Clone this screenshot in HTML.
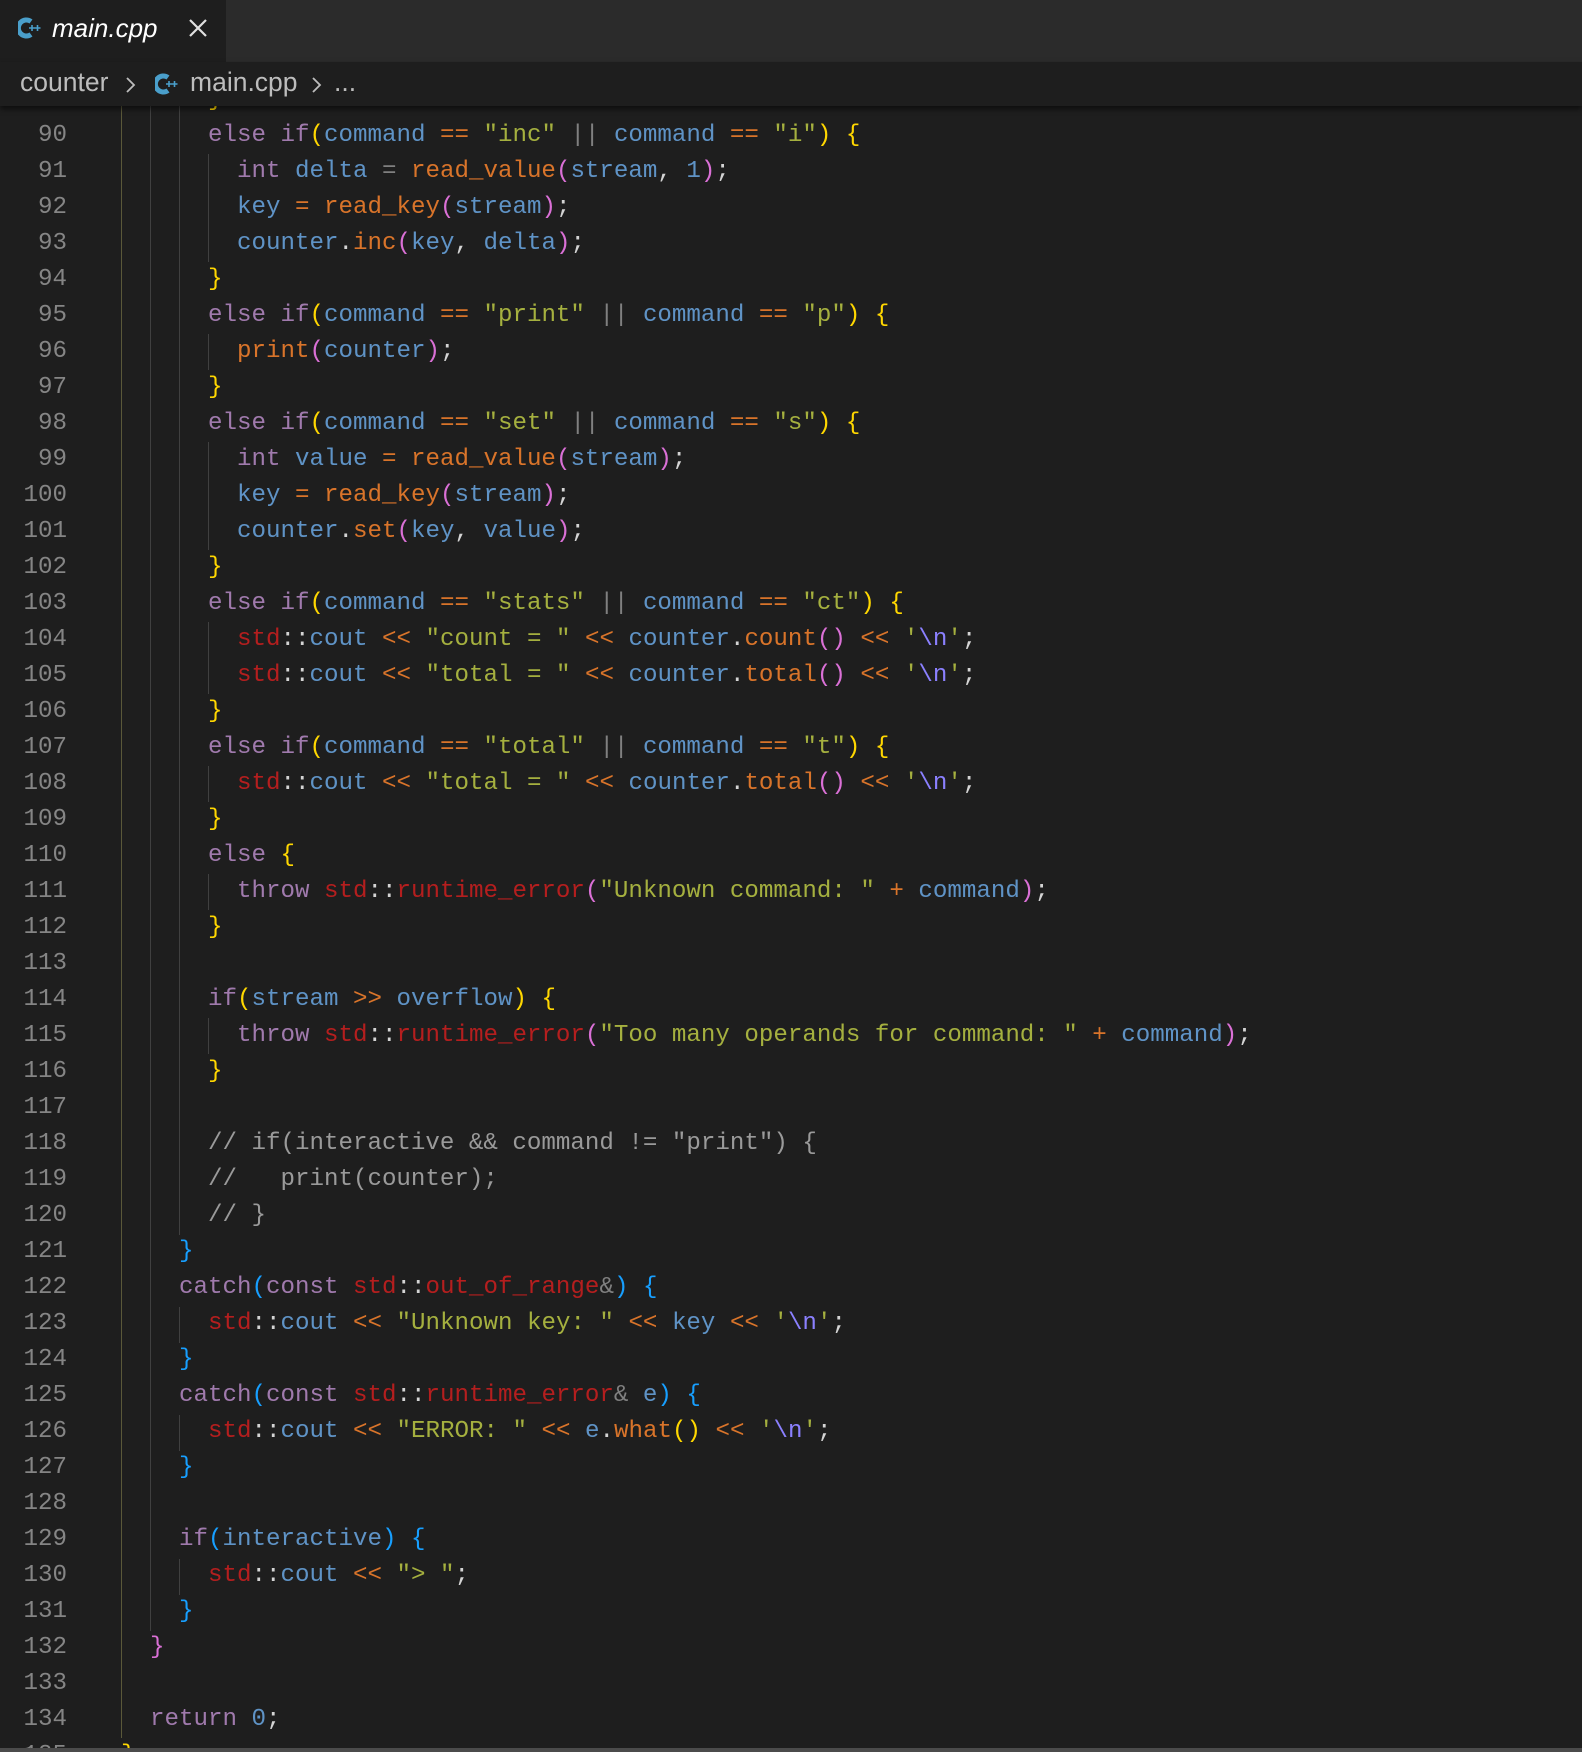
<!DOCTYPE html>
<html><head><meta charset="utf-8">
<style>
*{margin:0;padding:0;box-sizing:border-box}
html,body{width:1582px;height:1752px;overflow:hidden;background:#1e1e1e}
body{position:relative;font-family:"Liberation Sans",sans-serif}
#tabbar{position:absolute;left:0;top:0;width:1582px;height:62px;background:#2b2b2b;z-index:5}
#tab{position:absolute;left:0;top:0;width:226px;height:62px;background:#1e1e1e}
#tab .t{position:absolute;left:52px;top:13px;font-size:26px;font-style:italic;color:#fff}
#tab .x{position:absolute;left:188px;top:18px}
#bc{position:absolute;left:0;top:62px;width:1582px;height:44px;background:#1e1e1e;z-index:5;box-shadow:0 3px 5px rgba(0,0,0,.55);color:#bdbdbd;font-size:26.5px}
#bc span{position:absolute;top:5px}
.ico{position:absolute}
#code{position:absolute;left:0;top:82px;width:1582px;font-family:"Liberation Mono",monospace;font-size:24.17px}
.l{height:36px;line-height:36px;white-space:pre;position:relative}
.n{position:absolute;left:0;width:67px;text-align:right;color:#858585}
.c{position:absolute;left:121px;color:#d4d4d4}
.g{position:absolute;width:1px;background:#404040}
.k{color:#a07aad}.v{color:#5f93c6}.f{color:#d9742a}.s{color:#a5b03f}.o{color:#d9742a}
.gr{color:#808080}.sd{color:#b51e1e}.e{color:#8b80ff}.cm{color:#9a9a9a}
.y{color:#ffd700}.p{color:#da70d6}.b{color:#179fff}.nm{color:#5f93c6}
#sb{position:absolute;left:0;top:1748px;width:1582px;height:4px;background:#4b4b4b;z-index:6}
</style></head><body>
<div id="tabbar"><div id="tab">
<svg class="ico" style="left:18px;top:17px" width="24" height="22" viewBox="0 0 24 22"><path d="M13 4.5A8 8 0 1 0 13 17.5" fill="none" stroke="#4a9fcb" stroke-width="5"/><path d="M14 8v6M11 11h6M19.5 8v6M16.5 11h6" stroke="#4a9fcb" stroke-width="1.6"/></svg>
<span class="t">main.cpp</span>
<svg class="x" width="20" height="20" viewBox="0 0 20 20"><path d="M2 2L18 18M18 2L2 18" stroke="#e0e0e0" stroke-width="2.2"/></svg>
</div></div>
<div id="bc">
<span style="left:20px">counter</span>
<svg class="ico" style="left:125px;top:14px" width="12" height="18" viewBox="0 0 12 18"><path d="M2 2l7 7-7 7" fill="none" stroke="#bdbdbd" stroke-width="1.8"/></svg>
<svg class="ico" style="left:155px;top:11px" width="24" height="22" viewBox="0 0 24 22"><path d="M13 4.5A8 8 0 1 0 13 17.5" fill="none" stroke="#4a9fcb" stroke-width="5"/><path d="M14 8v6M11 11h6M19.5 8v6M16.5 11h6" stroke="#4a9fcb" stroke-width="1.6"/></svg>
<span style="left:190px">main.cpp</span>
<svg class="ico" style="left:311px;top:14px" width="12" height="18" viewBox="0 0 12 18"><path d="M2 2l7 7-7 7" fill="none" stroke="#bdbdbd" stroke-width="1.8"/></svg>
<span style="left:334px">...</span>
</div>

<!-- indent guides -->
<div class="g" style="left:121px;top:82px;height:1656px;background:#5a5839"></div>
<div class="g" style="left:150px;top:82px;height:1549px"></div>
<div class="g" style="left:179px;top:82px;height:1153px"></div>
<div class="g" style="left:179px;top:1307px;height:36px"></div>
<div class="g" style="left:179px;top:1415px;height:36px"></div>
<div class="g" style="left:179px;top:1559px;height:36px"></div>
<div class="g" style="left:208px;top:154px;height:108px"></div>
<div class="g" style="left:208px;top:334px;height:36px"></div>
<div class="g" style="left:208px;top:442px;height:108px"></div>
<div class="g" style="left:208px;top:622px;height:72px"></div>
<div class="g" style="left:208px;top:766px;height:36px"></div>
<div class="g" style="left:208px;top:874px;height:36px"></div>
<div class="g" style="left:208px;top:1018px;height:36px"></div>

<div id="code">
<div class="l"><span class="n">89</span><span class="c">      <span class="y">}</span></span></div>
<div class="l"><span class="n">90</span><span class="c">      <span class="k">else if</span><span class="y">(</span><span class="v">command</span> <span class="o">==</span> <span class="s">"inc"</span> <span class="gr">||</span> <span class="v">command</span> <span class="o">==</span> <span class="s">"i"</span><span class="y">)</span> <span class="y">{</span></span></div>
<div class="l"><span class="n">91</span><span class="c">        <span class="k">int</span> <span class="v">delta</span> <span class="gr">=</span> <span class="f">read_value</span><span class="p">(</span><span class="v">stream</span>, <span class="nm">1</span><span class="p">)</span>;</span></div>
<div class="l"><span class="n">92</span><span class="c">        <span class="v">key</span> <span class="o">=</span> <span class="f">read_key</span><span class="p">(</span><span class="v">stream</span><span class="p">)</span>;</span></div>
<div class="l"><span class="n">93</span><span class="c">        <span class="v">counter</span>.<span class="f">inc</span><span class="p">(</span><span class="v">key</span>, <span class="v">delta</span><span class="p">)</span>;</span></div>
<div class="l"><span class="n">94</span><span class="c">      <span class="y">}</span></span></div>
<div class="l"><span class="n">95</span><span class="c">      <span class="k">else if</span><span class="y">(</span><span class="v">command</span> <span class="o">==</span> <span class="s">"print"</span> <span class="gr">||</span> <span class="v">command</span> <span class="o">==</span> <span class="s">"p"</span><span class="y">)</span> <span class="y">{</span></span></div>
<div class="l"><span class="n">96</span><span class="c">        <span class="f">print</span><span class="p">(</span><span class="v">counter</span><span class="p">)</span>;</span></div>
<div class="l"><span class="n">97</span><span class="c">      <span class="y">}</span></span></div>
<div class="l"><span class="n">98</span><span class="c">      <span class="k">else if</span><span class="y">(</span><span class="v">command</span> <span class="o">==</span> <span class="s">"set"</span> <span class="gr">||</span> <span class="v">command</span> <span class="o">==</span> <span class="s">"s"</span><span class="y">)</span> <span class="y">{</span></span></div>
<div class="l"><span class="n">99</span><span class="c">        <span class="k">int</span> <span class="v">value</span> <span class="o">=</span> <span class="f">read_value</span><span class="p">(</span><span class="v">stream</span><span class="p">)</span>;</span></div>
<div class="l"><span class="n">100</span><span class="c">        <span class="v">key</span> <span class="o">=</span> <span class="f">read_key</span><span class="p">(</span><span class="v">stream</span><span class="p">)</span>;</span></div>
<div class="l"><span class="n">101</span><span class="c">        <span class="v">counter</span>.<span class="f">set</span><span class="p">(</span><span class="v">key</span>, <span class="v">value</span><span class="p">)</span>;</span></div>
<div class="l"><span class="n">102</span><span class="c">      <span class="y">}</span></span></div>
<div class="l"><span class="n">103</span><span class="c">      <span class="k">else if</span><span class="y">(</span><span class="v">command</span> <span class="o">==</span> <span class="s">"stats"</span> <span class="gr">||</span> <span class="v">command</span> <span class="o">==</span> <span class="s">"ct"</span><span class="y">)</span> <span class="y">{</span></span></div>
<div class="l"><span class="n">104</span><span class="c">        <span class="sd">std</span>::<span class="v">cout</span> <span class="o">&lt;&lt;</span> <span class="s">"count = "</span> <span class="o">&lt;&lt;</span> <span class="v">counter</span>.<span class="f">count</span><span class="p">()</span> <span class="o">&lt;&lt;</span> <span class="s">'<span class="e">\n</span>'</span>;</span></div>
<div class="l"><span class="n">105</span><span class="c">        <span class="sd">std</span>::<span class="v">cout</span> <span class="o">&lt;&lt;</span> <span class="s">"total = "</span> <span class="o">&lt;&lt;</span> <span class="v">counter</span>.<span class="f">total</span><span class="p">()</span> <span class="o">&lt;&lt;</span> <span class="s">'<span class="e">\n</span>'</span>;</span></div>
<div class="l"><span class="n">106</span><span class="c">      <span class="y">}</span></span></div>
<div class="l"><span class="n">107</span><span class="c">      <span class="k">else if</span><span class="y">(</span><span class="v">command</span> <span class="o">==</span> <span class="s">"total"</span> <span class="gr">||</span> <span class="v">command</span> <span class="o">==</span> <span class="s">"t"</span><span class="y">)</span> <span class="y">{</span></span></div>
<div class="l"><span class="n">108</span><span class="c">        <span class="sd">std</span>::<span class="v">cout</span> <span class="o">&lt;&lt;</span> <span class="s">"total = "</span> <span class="o">&lt;&lt;</span> <span class="v">counter</span>.<span class="f">total</span><span class="p">()</span> <span class="o">&lt;&lt;</span> <span class="s">'<span class="e">\n</span>'</span>;</span></div>
<div class="l"><span class="n">109</span><span class="c">      <span class="y">}</span></span></div>
<div class="l"><span class="n">110</span><span class="c">      <span class="k">else</span> <span class="y">{</span></span></div>
<div class="l"><span class="n">111</span><span class="c">        <span class="k">throw</span> <span class="sd">std</span>::<span class="sd">runtime_error</span><span class="p">(</span><span class="s">"Unknown command: "</span> <span class="o">+</span> <span class="v">command</span><span class="p">)</span>;</span></div>
<div class="l"><span class="n">112</span><span class="c">      <span class="y">}</span></span></div>
<div class="l"><span class="n">113</span><span class="c"></span></div>
<div class="l"><span class="n">114</span><span class="c">      <span class="k">if</span><span class="y">(</span><span class="v">stream</span> <span class="o">&gt;&gt;</span> <span class="v">overflow</span><span class="y">)</span> <span class="y">{</span></span></div>
<div class="l"><span class="n">115</span><span class="c">        <span class="k">throw</span> <span class="sd">std</span>::<span class="sd">runtime_error</span><span class="p">(</span><span class="s">"Too many operands for command: "</span> <span class="o">+</span> <span class="v">command</span><span class="p">)</span>;</span></div>
<div class="l"><span class="n">116</span><span class="c">      <span class="y">}</span></span></div>
<div class="l"><span class="n">117</span><span class="c"></span></div>
<div class="l"><span class="n">118</span><span class="c">      <span class="cm">// if(interactive &amp;&amp; command != "print") {</span></span></div>
<div class="l"><span class="n">119</span><span class="c">      <span class="cm">//   print(counter);</span></span></div>
<div class="l"><span class="n">120</span><span class="c">      <span class="cm">// }</span></span></div>
<div class="l"><span class="n">121</span><span class="c">    <span class="b">}</span></span></div>
<div class="l"><span class="n">122</span><span class="c">    <span class="k">catch</span><span class="b">(</span><span class="k">const</span> <span class="sd">std</span>::<span class="sd">out_of_range</span><span class="gr">&amp;</span><span class="b">)</span> <span class="b">{</span></span></div>
<div class="l"><span class="n">123</span><span class="c">      <span class="sd">std</span>::<span class="v">cout</span> <span class="o">&lt;&lt;</span> <span class="s">"Unknown key: "</span> <span class="o">&lt;&lt;</span> <span class="v">key</span> <span class="o">&lt;&lt;</span> <span class="s">'<span class="e">\n</span>'</span>;</span></div>
<div class="l"><span class="n">124</span><span class="c">    <span class="b">}</span></span></div>
<div class="l"><span class="n">125</span><span class="c">    <span class="k">catch</span><span class="b">(</span><span class="k">const</span> <span class="sd">std</span>::<span class="sd">runtime_error</span><span class="gr">&amp;</span> <span class="v">e</span><span class="b">)</span> <span class="b">{</span></span></div>
<div class="l"><span class="n">126</span><span class="c">      <span class="sd">std</span>::<span class="v">cout</span> <span class="o">&lt;&lt;</span> <span class="s">"ERROR: "</span> <span class="o">&lt;&lt;</span> <span class="v">e</span>.<span class="f">what</span><span class="y">()</span> <span class="o">&lt;&lt;</span> <span class="s">'<span class="e">\n</span>'</span>;</span></div>
<div class="l"><span class="n">127</span><span class="c">    <span class="b">}</span></span></div>
<div class="l"><span class="n">128</span><span class="c"></span></div>
<div class="l"><span class="n">129</span><span class="c">    <span class="k">if</span><span class="b">(</span><span class="v">interactive</span><span class="b">)</span> <span class="b">{</span></span></div>
<div class="l"><span class="n">130</span><span class="c">      <span class="sd">std</span>::<span class="v">cout</span> <span class="o">&lt;&lt;</span> <span class="s">"&gt; "</span>;</span></div>
<div class="l"><span class="n">131</span><span class="c">    <span class="b">}</span></span></div>
<div class="l"><span class="n">132</span><span class="c">  <span class="p">}</span></span></div>
<div class="l"><span class="n">133</span><span class="c"></span></div>
<div class="l"><span class="n">134</span><span class="c">  <span class="k">return</span> <span class="nm">0</span>;</span></div>
<div class="l"><span class="n">135</span><span class="c"><span class="y">}</span></span></div>
</div>
<div id="sb"></div>
</body></html>
